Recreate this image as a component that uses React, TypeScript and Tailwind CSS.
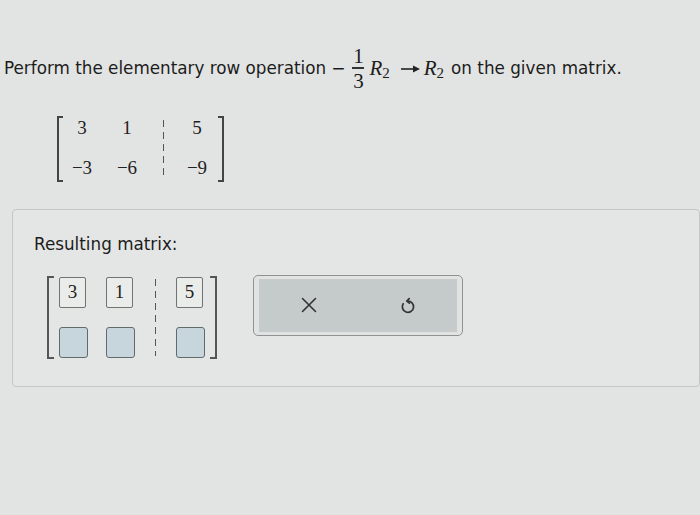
const sans = { fontFamily: '"DejaVu Sans", Verdana, sans-serif' };
const serif = { fontFamily: '"Liberation Serif", "Times New Roman", serif' };

function Fraction() {
  return (
    <span className="inline-flex flex-col items-center ml-[7px] mr-[5px]" style={serif}>
      <span className="text-[21px] leading-[18px] block">1</span>
      <span className="block h-[1.5px] w-[12px] bg-[#333] mt-[2px] mb-[3px]" />
      <span className="text-[21px] leading-[18px] block">3</span>
    </span>
  );
}

function Arrow() {
  return (
    <svg width="21" height="10" viewBox="0 0 21 10" className="ml-[10px] mr-[3px] mt-[2px]">
      <path d="M1 5 H15" stroke="#222" strokeWidth="1.6" />
      <path d="M13 1.5 L20 5 L13 8.5 Z" fill="#222" />
    </svg>
  );
}

function Dashed() {
  return (
    <div className="w-px h-full bg-[repeating-linear-gradient(to_bottom,#555_0px,#555_7px,transparent_7px,transparent_12px)]" />
  );
}

function GivenMatrix() {
  return (
    <div className="flex items-stretch ml-[57px] mt-[26px] h-[66px]" style={serif}>
      <div className="w-[6px] border-l-2 border-y-2 border-[#444]" />
      <div className="grid grid-cols-[38px_52px_20px_45px] grid-rows-[26px_26px] gap-y-[14px] items-center text-[19px] text-[#222]">
        <span className="text-center">3</span>
        <span className="text-center">1</span>
        <span className="row-span-2 flex justify-center h-[58px] self-center"><Dashed /></span>
        <span className="text-center pl-[3px]">5</span>
        <span className="text-center">−3</span>
        <span className="text-center">−6</span>
        <span className="text-center pl-[3px]">−9</span>
      </div>
      <div className="w-[6px] border-r-2 border-y-2 border-[#444]" />
    </div>
  );
}

function FilledBox({ v }: { v: string }) {
  return (
    <div className="w-[27px] h-[31px] border border-[#6f7473] rounded-[2px] bg-[#eaecea] flex items-center justify-center text-[19px] text-[#222]" style={serif}>
      {v}
    </div>
  );
}

function EmptyBox() {
  return <div className="w-[29px] h-[31px] border border-[#626b6c] rounded-[3px] bg-[#c6d6dc]" />;
}

function UndoIcon() {
  return (
    <svg width="16" height="18" viewBox="0 0 16 18" fill="none" stroke="#333" strokeWidth="1.7" strokeLinecap="round" strokeLinejoin="round">
      <path d="M7.5 5.2 A5.6 5.6 0 1 1 3.2 7.8" />
      <path d="M9.2 2.6 L6.8 5.1 L9.4 7.2" />
    </svg>
  );
}

function CloseIcon() {
  return (
    <svg width="18" height="18" viewBox="0 0 18 18" fill="none" stroke="#333" strokeWidth="1.6" strokeLinecap="round">
      <path d="M2.5 2.5 L15.5 15.5 M15.5 2.5 L2.5 15.5" />
    </svg>
  );
}

function Column({ v }: { v: string }) {
  return (
    <div className="w-[29px] flex flex-col justify-between">
      <FilledBox v={v} />
      <EmptyBox />
    </div>
  );
}

function ResultMatrix() {
  return (
    <div className="flex items-stretch h-[83px]">
      <div className="w-[7px] border-l-2 border-y-2 border-[#555]" />
      <div className="flex pl-[5px] pr-[5px] py-[1px]">
        <Column v="3" />
        <div className="w-[18px]" />
        <Column v="1" />
        <div className="w-[41px] flex justify-center py-[2px]"><Dashed /></div>
        <Column v="5" />
      </div>
      <div className="w-[7px] border-r-2 border-y-2 border-[#555]" />
    </div>
  );
}

export default function App() {
  return (
    <div className="w-[700px] h-[515px] bg-[#e2e4e3] overflow-hidden text-[#1c1c1c]" style={sans}>
      <div className="pt-[47px] pl-[4px] flex items-center text-[16.8px] whitespace-nowrap">
        <span>Perform the elementary row operation</span>
        <span className="ml-[5px] text-[17px]">−</span>
        <Fraction />
        <span className="italic text-[21px]" style={serif}>R</span>
        <span className="text-[15px] mt-[10px]" style={serif}>2</span>
        <Arrow />
        <span className="italic text-[21px]" style={serif}>R</span>
        <span className="text-[15px] mt-[10px]" style={serif}>2</span>
        <span className="ml-[7px]">on the given matrix.</span>
      </div>

      <GivenMatrix />

      <div className="ml-[12px] mt-[27px] h-[178px] border border-[#c4c7c6] rounded-[4px] bg-[#e4e6e5] pl-[21px] pt-[23px]">
        <div className="text-[16.8px] leading-[22px]">Resulting matrix:</div>
        <div className="flex items-start mt-[21px] ml-[13px]">
          <ResultMatrix />
          <div className="ml-[36px] -mt-[1px] w-[210px] h-[61px] border border-[#8e9392] rounded-[5px] px-[5px] py-[3px] bg-[#e0e3e2]">
            <div className="h-full bg-[#c4cbca] flex items-center justify-around">
              <CloseIcon />
              <UndoIcon />
            </div>
          </div>
        </div>
      </div>
    </div>
  );
}
